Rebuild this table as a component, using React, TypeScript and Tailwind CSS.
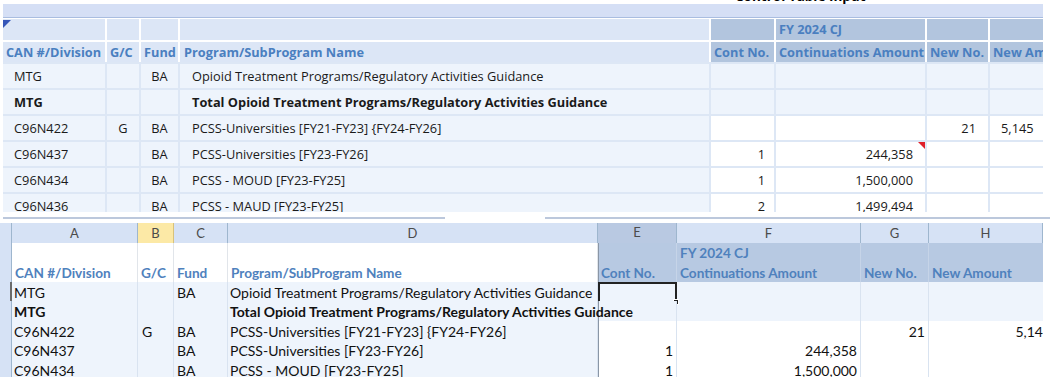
import React from "react";

const topCols = "grid grid-cols-[102px_32px_37px_529px_63px_149px_61px_53px]";
const botCols = "grid grid-cols-[12px_126px_36px_54px_370px_79px_184px_68px_114px]";

type Row = {
  a: string;
  b: string;
  c: string;
  d: string;
  e: string;
  f: string;
  g: string;
  h: string;
  bold?: boolean;
  shaded?: boolean;
  note?: boolean;
  hTop?: string;
  hBot?: string;
};

const rows: Row[] = [
  { a: "MTG", b: "", c: "BA", d: "Opioid Treatment Programs/Regulatory Activities Guidance", e: "", f: "", g: "", h: "", shaded: true },
  { a: "MTG", b: "", c: "", d: "Total Opioid Treatment Programs/Regulatory Activities Guidance", e: "", f: "", g: "", h: "", bold: true, shaded: true },
  { a: "C96N422", b: "G", c: "BA", d: "PCSS-Universities [FY21-FY23] {FY24-FY26]", e: "", f: "", g: "21", h: "", hTop: "5,145", hBot: "5,14" },
  { a: "C96N437", b: "", c: "BA", d: "PCSS-Universities [FY23-FY26]", e: "1", f: "244,358", g: "", h: "", note: true },
  { a: "C96N434", b: "", c: "BA", d: "PCSS - MOUD [FY23-FY25]", e: "1", f: "1,500,000", g: "", h: "" },
  { a: "C96N436", b: "", c: "BA", d: "PCSS - MAUD [FY23-FY25]", e: "2", f: "1,499,494", g: "", h: "" },
];

const topFont = { fontFamily: '"Open Sans", "Noto Sans", sans-serif' };
const botFont = { fontFamily: 'Lato, "Noto Sans", sans-serif' };

function TopPanel() {
  return (
    <div className="h-[212px] overflow-hidden" style={topFont}>
      <div className="h-[4px] overflow-hidden w-[1043px]">
        <div className="ml-[735px] -mt-[13px] text-[13.5px] font-bold text-black leading-[18px] whitespace-nowrap">
          Control Table Input
        </div>
      </div>
      <div className="ml-[3px] w-[1040px]">
        <div className="h-[14px] bg-[#d5dff5] border-b border-[#a9bde0]" />
        <div className="bg-white pt-[1px] flex flex-col gap-[2px]">
          <div className={`${topCols} gap-[2px] h-[21px]`}>
            <div className="bg-[#dce6f6] flex items-start">
              <svg width="8" height="8" viewBox="0 0 8 8" className="mt-[1px]">
                <polygon points="0,0 8,0 0,8" fill="#3556b8" />
              </svg>
            </div>
            <div className="bg-[#dce6f6]" />
            <div className="bg-[#dce6f6]" />
            <div className="bg-[#dce6f6]" />
            <div className="bg-[#b2c5de]" />
            <div className="bg-[#b2c5de] flex items-center pl-[3px] text-[12.75px] font-bold text-[#4a7fc0] whitespace-nowrap">
              FY 2024 CJ
            </div>
            <div className="bg-[#b2c5de]" />
            <div className="bg-[#b2c5de]" />
          </div>
          <div className={`${topCols} gap-[2px] h-[20px] text-[12.75px] font-bold text-[#4a7fc0] whitespace-nowrap leading-[20px]`}>
            <div className="bg-[#dce6f6] pl-[3px]">CAN #/Division</div>
            <div className="bg-[#dce6f6] pl-[3px]">G/C</div>
            <div className="bg-[#dce6f6] pl-[3px]">Fund</div>
            <div className="bg-[#dce6f6] pl-[4px]">Program/SubProgram Name</div>
            <div className="bg-[#b2c5de] pl-[3px]">Cont No.</div>
            <div className="bg-[#b2c5de] pl-[3px] overflow-hidden">Continuations Amount</div>
            <div className="bg-[#b2c5de] pl-[3px]">New No.</div>
            <div className="bg-[#b2c5de] pl-[3px] overflow-hidden">New Amount</div>
          </div>
        </div>
        <div className="bg-[#dde7f5] pt-[2px] flex flex-col gap-[2px]">
          {rows.map((r, i) => {
            const right = r.shaded ? "bg-[#eef4fc]" : "bg-white";
            return (
              <div
                key={i}
                className={`${topCols} gap-[2px] h-[24px] text-[12.8px] text-[#1a1a1a] leading-[24px] whitespace-nowrap ${r.bold ? "font-bold text-[12.6px]" : ""}`}
              >
                <div className="bg-[#eef4fc] pl-[11px]">{r.a}</div>
                <div className="bg-[#eef4fc] text-center">{r.b}</div>
                <div className="bg-[#eef4fc] text-center">{r.c}</div>
                <div className="bg-[#eef4fc] pl-[12px]">{r.d}</div>
                <div className={`${right} text-right pr-[9px]`}>{r.e}</div>
                <div className={`${right} text-right pr-[12px] relative`}>
                  {r.f}
                  {r.note && (
                    <svg width="7" height="7" viewBox="0 0 7 7" className="absolute right-0 top-0">
                      <polygon points="0,0 7,0 7,7" fill="#e0202a" />
                    </svg>
                  )}
                </div>
                <div className={`${right} text-right pr-[12px]`}>{r.g}</div>
                <div className={`${right} pl-[11px] overflow-hidden`}>{r.hTop ?? ""}</div>
              </div>
            );
          })}
        </div>
      </div>
    </div>
  );
}

function Separator() {
  return (
    <div className="h-[11px] flex items-start pt-[5px]">
      <div className="ml-[3px] w-[442px] h-[2px] bg-[#bcc8dc]" />
      <div className="ml-[100px] w-[505px] h-[2px] bg-[#bcc8dc]" />
    </div>
  );
}

function BottomPanel() {
  const hdr = "bg-[#d6e2f5] border-r border-b border-[#9eb6ce] flex items-center justify-center text-[13px] text-[#4b4b4b]";
  const heights = ["h-[19px]", "h-[20px]", "h-[19px]", "h-[20px]", "h-[19px]"];
  return (
    <div className="h-[154px] overflow-hidden w-[1043px]" style={botFont}>
      {/* column letters */}
      <div className={`${botCols} h-[20px]`}>
        <div className={hdr} />
        <div className={hdr}>A</div>
        <div className="bg-[#fce9a6] border-r border-b border-[#d8c27a] flex items-center justify-center text-[13px] text-[#4b4b4b]">B</div>
        <div className={hdr}>C</div>
        <div className={hdr}>D</div>
        <div className="bg-[#b9c9e2] border-r border-[#9eb6ce] border-b-2 border-b-[#4d5560] flex items-center justify-center text-[13px] text-[#4b4b4b]">E</div>
        <div className={hdr}>F</div>
        <div className={hdr}>G</div>
        <div className={hdr}>H</div>
      </div>
      {/* header row 1 */}
      <div className={`${botCols} h-[19px] text-[13.6px] font-bold text-[#4f81bd] leading-[18px] pt-0 whitespace-nowrap`}>
        <div className="bg-[#d6e2f5] border-r border-b border-[#9eb6ce]" />
        <div className="bg-white border-r border-b border-[#e1e5ea]" />
        <div className="bg-white border-r border-b border-[#e1e5ea]" />
        <div className="bg-white border-r border-b border-[#e1e5ea]" />
        <div className="bg-white border-r border-b border-[#e1e5ea]" />
        <div className="bg-[#b7c9e2] border-l border-l-[#8a96a6] border-r border-b border-[#c6d4e8]" />
        <div className="bg-[#b7c9e2] border-r border-b border-[#c6d4e8] pl-[3px] pt-[1px]">FY 2024 CJ</div>
        <div className="bg-[#b7c9e2] border-r border-b border-[#c6d4e8]" />
        <div className="bg-[#b7c9e2] border-b border-[#c6d4e8]" />
      </div>
      {/* header row 2 */}
      <div className={`${botCols} h-[20px] text-[13.6px] font-bold text-[#4f81bd] leading-[18px] whitespace-nowrap`}>
        <div className="bg-[#d6e2f5] border-r border-b border-[#9eb6ce]" />
        <div className="bg-white border-r border-[#e1e5ea] border-b border-b-[#9aa4b2] pl-[3px] pt-[2px]">CAN #/Division</div>
        <div className="bg-white border-r border-[#e1e5ea] border-b border-b-[#9aa4b2] pl-[3px] pt-[2px]">G/C</div>
        <div className="bg-white border-r border-[#e1e5ea] border-b border-b-[#9aa4b2] pl-[3px] pt-[2px]">Fund</div>
        <div className="bg-white border-r border-[#e1e5ea] border-b border-b-[#9aa4b2] pl-[3px] pt-[2px]">Program/SubProgram Name</div>
        <div className="bg-[#b7c9e2] border-l border-l-[#8a96a6] border-r border-[#c6d4e8] border-b-2 border-b-[#8295b0] pl-[2px] pt-[2px]">Cont No.</div>
        <div className="bg-[#b7c9e2] border-r border-[#c6d4e8] border-b-2 border-b-[#8295b0] pl-[3px] pt-[2px]">Continuations Amount</div>
        <div className="bg-[#b7c9e2] border-r border-[#c6d4e8] border-b-2 border-b-[#8295b0] pl-[3px] pt-[2px]">New No.</div>
        <div className="bg-[#b7c9e2] border-b-2 border-b-[#8295b0] pl-[3px] pt-[2px]">New Amount</div>
      </div>
      {rows.slice(0, 5).map((r, i) => {
        const right = r.shaded ? "bg-[#eef4fc]" : "bg-white";
        const grid = "border-r border-b border-[#d9e3f0]";
        return (
          <div
            key={i}
            className={`${botCols} ${heights[i]} text-[14px] text-[#111] leading-[18px] whitespace-nowrap ${r.bold ? "font-bold text-[13.6px]" : ""}`}
          >
            <div className={`bg-[#d6e2f5] border-b border-[#9eb6ce] ${i === 0 ? "border-r-2 border-r-[#6b6b6b]" : "border-r border-r-[#9eb6ce]"}`} />
            <div className={`bg-[#eef4fc] ${grid} pl-[2px] pt-[2px]`}>{r.a}</div>
            <div className={`bg-[#eef4fc] ${grid} pl-[4px] pt-[2px]`}>{r.b}</div>
            <div className={`bg-[#eef4fc] ${grid} pl-[3px] pt-[2px]`}>{r.c}</div>
            <div className={`bg-[#eef4fc] ${grid} pl-[2px] pt-[2px] relative z-10`}>{r.d}</div>
            <div
              className={`${right} ${i === 0 ? "border-2 border-[#222]" : `border-l border-l-[#8a96a6] ${grid}`} text-right pr-[3px] pt-[2px] relative`}
            >
              {r.e}
              {i === 0 && <div className="absolute -right-[4px] -bottom-[4px] w-[6px] h-[6px] bg-[#222] border border-white" />}
            </div>
            <div className={`${right} ${grid} text-right pr-[3px] pt-[2px]`}>{r.f}</div>
            <div className={`${right} ${grid} text-right pr-[3px] pt-[2px]`}>{r.g}</div>
            <div className={`${right} border-b border-[#d9e3f0] text-right pr-0 pt-[2px] overflow-hidden`}>{r.hBot ?? ""}</div>
          </div>
        );
      })}
    </div>
  );
}

export default function App() {
  return (
    <div className="w-[1064px] h-[377px] bg-white overflow-hidden">
      <TopPanel />
      <Separator />
      <BottomPanel />
    </div>
  );
}
